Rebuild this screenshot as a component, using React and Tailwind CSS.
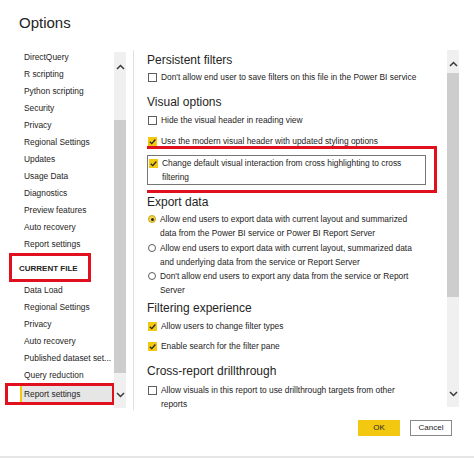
import React from "react";

const RED = "border-[#e0101f]";

function ChevUp() {
  return (
    <svg width="9" height="6" viewBox="0 0 9 6">
      <path d="M1 5 L4.5 1.5 L8 5" fill="none" stroke="#3b3a39" strokeWidth="1.5" />
    </svg>
  );
}
function ChevDown() {
  return (
    <svg width="9" height="6" viewBox="0 0 9 6">
      <path d="M1 1 L4.5 4.5 L8 1" fill="none" stroke="#3b3a39" strokeWidth="1.5" />
    </svg>
  );
}

function Check({ checked }) {
  if (checked) {
    return (
      <span className="w-[9px] h-[9px] bg-[#f2c811] flex items-center justify-center shrink-0">
        <svg width="9" height="9" viewBox="0 0 10 10">
          <path d="M2 5.2 L4.2 7.4 L8.2 2.8" fill="none" stroke="#252423" strokeWidth="1.4" />
        </svg>
      </span>
    );
  }
  return <span className="block w-[9px] h-[9px] border border-[#605e5c] bg-white shrink-0" />;
}

function Radio({ on }) {
  if (on) {
    return (
      <span className="w-[8px] h-[8px] rounded-full border border-[#c9a70a] bg-[#f5d651] flex items-center justify-center shrink-0">
        <span className="w-[3px] h-[3px] rounded-full bg-[#252423]" />
      </span>
    );
  }
  return <span className="block w-[8px] h-[8px] rounded-full border border-[#605e5c] bg-white shrink-0" />;
}

function CbRow({ checked, lines, cls = "" }) {
  return (
    <div className={"flex items-start text-[8.4px] leading-[14px] " + cls}>
      <span className="mt-[2.5px] ml-[1px]">
        <Check checked={checked} />
      </span>
      <div className="ml-[4px]">
        {lines.map((l, i) => (
          <div key={i} className="whitespace-nowrap">{l}</div>
        ))}
      </div>
    </div>
  );
}

function RadioRow({ on, lines, cls = "" }) {
  return (
    <div className={"flex items-start text-[8.4px] leading-[14px] " + cls}>
      <span className="mt-[3px] ml-[1px]">
        <Radio on={on} />
      </span>
      <div className="ml-[4px]">
        {lines.map((l, i) => (
          <div key={i} className="whitespace-nowrap">{l}</div>
        ))}
      </div>
    </div>
  );
}

function Heading({ children, cls = "" }) {
  return <div className={"text-[12px] leading-[16px] whitespace-nowrap " + cls}>{children}</div>;
}

const globalItems = [
  "DirectQuery",
  "R scripting",
  "Python scripting",
  "Security",
  "Privacy",
  "Regional Settings",
  "Updates",
  "Usage Data",
  "Diagnostics",
  "Preview features",
  "Auto recovery",
  "Report settings",
];
const fileItems = [
  "Data Load",
  "Regional Settings",
  "Privacy",
  "Auto recovery",
  "Published dataset set...",
  "Query reduction",
];

export default function App() {
  return (
    <div className="relative w-[474px] h-[458px] bg-white flex flex-col overflow-hidden text-[#252423] font-['Liberation_Sans',Arial,sans-serif]">
      <div className="h-[49px] pl-[19px] pt-[14px] text-[15px] leading-[18px]">Options</div>

      <div className="flex h-[361px]">
        {/* left nav */}
        <div className="w-[114px] flex flex-col overflow-hidden">
          {globalItems.map((t) => (
            <div key={"g" + t} className="h-[17px] leading-[17px] pl-[24px] text-[8.4px] whitespace-nowrap">
              {t}
            </div>
          ))}
          <div className={"ml-[9px] w-[82px] h-[29px] border-[3px] " + RED + " pl-[7px] flex items-center"}>
            <span className="text-[8px] font-bold whitespace-nowrap mt-[2px]">CURRENT FILE</span>
          </div>
          {fileItems.map((t) => (
            <div key={"f" + t} className="h-[17px] leading-[17px] pl-[24px] text-[8.4px] whitespace-nowrap">
              {t}
            </div>
          ))}
          <div className={"ml-[5px] mt-[-1px] w-[110px] h-[22px] border-[3px] " + RED + " flex"}>
            <div className="ml-[12px] flex-1 bg-[#e6e6e6] border-l-2 border-[#f2c811] pl-[2px] leading-[16px] text-[8.4px] whitespace-nowrap">
              Report settings
            </div>
          </div>
        </div>

        {/* left scrollbar */}
        <div className="w-[12px] mt-[3px] h-[356px] bg-[#f0f0f0] flex flex-col">
          <div className="h-[68px] flex justify-center pt-[12px]">
            <ChevUp />
          </div>
          <div className="h-[253px] bg-[#cdcdcd]" />
          <div className="flex-1 flex justify-center items-end pb-[10px]">
            <ChevDown />
          </div>
        </div>

        <div className="w-[7px]" />
        <div className="w-px bg-[#e1e1e1] mt-[1px] h-[360px]" />
        <div className="w-[13px]" />

        {/* content */}
        <div className="w-[300px] flex flex-col overflow-hidden">
          <Heading cls="mt-[3px]">Persistent filters</Heading>
          <CbRow cls="mt-[2px]" checked={false} lines={["Don't allow end user to save filters on this file in the Power BI service"]} />

          <Heading cls="mt-[10px]">Visual options</Heading>
          <CbRow cls="mt-[3px]" checked={false} lines={["Hide the visual header in reading view"]} />
          <CbRow cls="mt-[7px]" checked={true} lines={["Use the modern visual header with updated styling options"]} />

          <div className={"ml-[-7px] mt-[-2px] w-[297px] h-[47px] border-[3px] " + RED + " pl-[4px] pt-[6px] shrink-0"}>
            <div className="w-[279px] h-[30px] border border-[#767676]">
              <CbRow
                checked={true}
                lines={["Change default visual interaction from cross highlighting to cross", "filtering"]}
              />
            </div>
          </div>

          <Heading cls="mt-[1px]">Export data</Heading>
          <RadioRow
            cls="mt-[2px]"
            on={true}
            lines={[
              "Allow end users to export data with current layout and summarized",
              "data from the Power BI service or Power BI Report Server",
            ]}
          />
          <RadioRow
            cls="mt-[1px]"
            on={false}
            lines={[
              "Allow end users to export data with current layout, summarized data",
              "and underlying data from the service or Report Server",
            ]}
          />
          <RadioRow
            on={false}
            lines={["Don't allow end users to export any data from the service or Report", "Server"]}
          />

          <Heading cls="mt-[3px]">Filtering experience</Heading>
          <CbRow cls="mt-[3px]" checked={true} lines={["Allow users to change filter types"]} />
          <CbRow cls="mt-[6px]" checked={true} lines={["Enable search for the filter pane"]} />

          <Heading cls="mt-[10px]">Cross-report drillthrough</Heading>
          <CbRow
            cls="mt-[4px]"
            checked={false}
            lines={["Allow visuals in this report to use drillthrough targets from other", "reports"]}
          />
        </div>

        {/* right scrollbar */}
        <div className="w-[12px] mt-[1px] h-[357px] bg-[#f0f0f0] flex flex-col">
          <div className="h-[23px] flex justify-center pt-[11px]">
            <ChevUp />
          </div>
          <div className="h-[224px] bg-[#cdcdcd]" />
          <div className="flex-1 flex justify-center items-end pb-[10px]">
            <ChevDown />
          </div>
        </div>
      </div>

      {/* footer */}
      <div className="flex justify-end gap-[10px] pr-[22px] mt-[10px]">
        <button className="w-[42px] h-[16px] bg-[#f2c811] text-[8px] leading-[16px] text-[#252423] text-center">OK</button>
        <button className="w-[42px] h-[16px] bg-white border border-[#8a8886] text-[8px] leading-[14px] text-[#252423] text-center">
          Cancel
        </button>
      </div>

      <div className="mt-auto h-[2px] bg-[#e6e6e6]" />
    </div>
  );
}
